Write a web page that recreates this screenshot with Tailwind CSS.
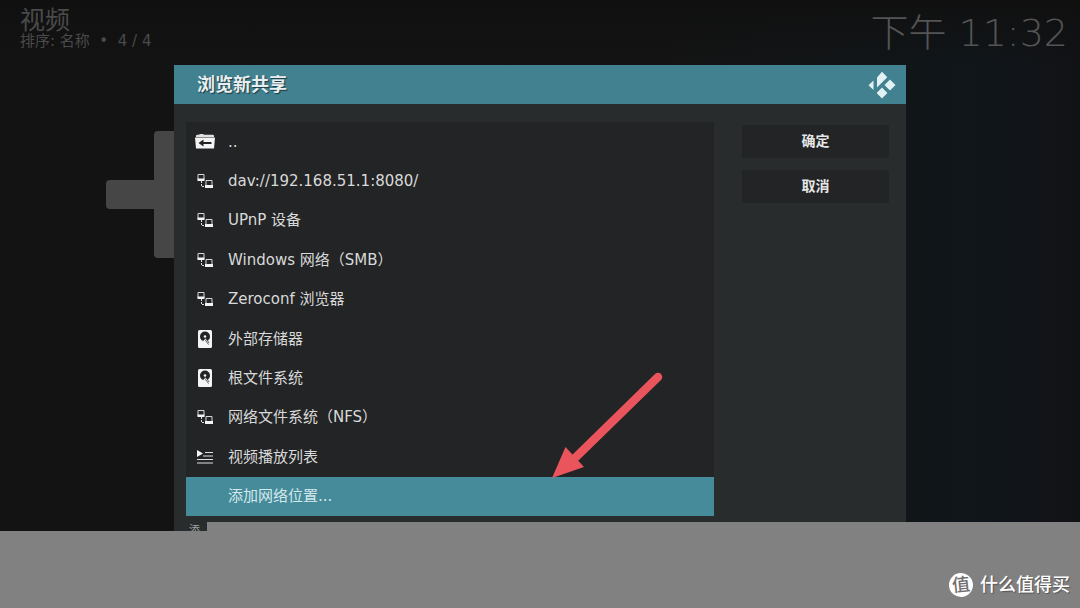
<!DOCTYPE html>
<html lang="zh-CN">
<head>
    <meta charset="UTF-8">
    <meta name="viewport" content="width=device-width, initial-scale=1.0">
    <title>视频 | 浏览新共享</title>
    <script src="https://cdn.jsdelivr.net/npm/@tailwindcss/browser@4"></script>
    <style>
        body { font-family: 'DejaVu Sans', 'Noto Sans CJK SC', sans-serif; }
    </style>
</head>
<body class="bg-[#121212]">

    <!-- Иконки -->
    <svg class="hidden">
        <symbol id="icon-up" viewBox="0 0 20 16">
            <path d="M1 3V1.500l1-.8h2L5 0h3l1 .8h9l1 .8V3z" fill="#e0e0e0"/>
            <path d="M0 3.600h20l-1 11H1z" fill="#f4f4f4"/>
            <path d="M3.500 9 8.500 5.500v2.500h8v2h-8v2.500z" fill="#222425"/>
        </symbol>
        <symbol id="icon-net" viewBox="0 0 16 14">
            <path d="M1 .5h6v5H1zM9 6.500h6v5H9z" fill="none" stroke="#d8d8d8"/>
            <path d="M.5 4.500h7V7h-7zM8 11h8v3H8z" fill="#f4f4f4"/>
            <path d="M4.500 7v6M5 12.500h3" fill="none" stroke="#e0e0e0" stroke-dasharray="2 1"/>
        </symbol>
        <symbol id="icon-disk" viewBox="0 0 14 18">
            <rect width="14" height="18" rx="1.500" fill="#f4f4f4"/>
            <circle cx="7" cy="6.500" r="5" fill="#222425"/>
            <circle cx="7" cy="6.500" r="1.300" fill="#f4f4f4"/>
            <path d="M6.500 9.500 10.500 14.500" stroke="#f4f4f4" stroke-width="3"/>
            <path d="M7 9.500 10.500 14.500M8.500 9 11 13" stroke="#222425" stroke-width=".7"/>
        </symbol>
        <symbol id="icon-list" viewBox="0 0 16 14">
            <path d="M0 0l6 3.500L0 7z" fill="#f4f4f4"/>
            <path d="M8 2.500h8M6 6h10M0 9.500h16M0 13h16" stroke="#e0e0e0" stroke-width="1.200"/>
        </symbol>
    </svg>

    <div class="relative min-h-screen flex flex-col overflow-hidden bg-linear-to-r from-[#131313] from-60% via-[#10161a] via-90% to-[#111216]">

        <!-- Шапка -->
        <header class="h-[65px] flex justify-between pl-5 pr-3 text-[#4a4a4a] bg-linear-to-b from-[#101010] to-transparent">
            <div class="pt-2">
                <h1 class="text-[25px] leading-[26px]">视频</h1>
                <p class="text-[15px] leading-[14px]">排序: 名称 &nbsp;•&nbsp; 4 / 4</p>
            </div>
            <time class="pt-3 text-[38px] leading-[42px] font-extralight text-[#545454]">下午 11:32</time>
        </header>

        <!-- Плюс за окном -->
        <div class="absolute left-[106px] top-[180px] w-[126px] h-[29px] rounded bg-[#464646]"></div>
        <div class="absolute left-[154px] top-[131px] w-[30px] h-[127px] rounded bg-[#464646]"></div>

        <!-- Окно -->
        <main class="relative flex-1 w-full max-w-[732px] mx-auto flex flex-col bg-[#282c2d]">
            <div class="h-[39px] pl-[23px] pr-[10px] flex items-center justify-between bg-[#418190]">
                <h2 class="text-[18px] leading-6 font-bold text-[#e9eef0] text-shadow-[1px_1px_1px_#1b3a42]">浏览新共享</h2>
                <svg class="size-7" viewBox="0 0 28 28" fill="#e2f1f3">
                    <path d="M9 6.500 14 .8l5.300 5.400L9 16.500zM5.500 9.500v9.500L.5 14.200zM22 8.600l5.500 5.500-5.500 5.400-5.500-5.400zM14 16.600l5.400 5.400L14 27.400 8.600 22z"/>
                </svg>
            </div>
            <div class="flex-1 flex gap-7 pt-[18px] pl-3 pr-[17px]">
                <ul id="shares" class="flex-1 h-[394px] grid auto-rows-fr bg-[#222425]"></ul>
                <div class="w-[147px] pt-[3px] flex flex-col gap-3">
                    <button class="h-[33px] rounded-xs bg-[#222425] text-[14px] font-bold text-[#e6e6e6]">确定</button>
                    <button class="h-[33px] rounded-xs bg-[#222425] text-[14px] font-bold text-[#e6e6e6]">取消</button>
                </div>
            </div>
            <p class="h-[15px] pl-[15px] pt-[9px] overflow-hidden text-[11px] leading-[12px] text-[#a0a4a5]">添</p>
        </main>

        <!-- Нижняя полоса -->
        <footer class="relative h-[77px] flex items-end justify-end gap-[7px] pr-[10px] pb-[11px] bg-[#828182]">
            <div class="absolute left-[207px] right-0 -top-[9px] h-[9px] bg-[#828182]"></div>
            <span class="size-6 flex items-center justify-center rounded-full bg-white text-[18px] leading-none font-medium text-[#6f6e6f] -rotate-6">值</span>
            <span class="text-[18px] leading-6 font-medium text-white text-shadow-[1px_1px_1px_#555]">什么值得买</span>
        </footer>

        <!-- Красная стрелка -->
        <svg class="absolute left-[550px] top-[370px] w-[115px] h-[110px]" viewBox="0 0 115 110">
            <path d="M108 7 24 89" stroke="#ea545d" stroke-width="8.500" stroke-linecap="round"/>
            <path d="M2 108 15.500 77 34 97z" fill="#ea545d"/>
        </svg>
    </div>

    <script>
        const icons = {
            up: '<svg class="w-5 h-4"><use href="#icon-up"/></svg>',
            net: '<svg class="w-4 h-3.5"><use href="#icon-net"/></svg>',
            disk: '<svg class="w-3.5 h-[18px]"><use href="#icon-disk"/></svg>',
            list: '<svg class="w-4 h-3.5"><use href="#icon-list"/></svg>'
        };

        const shares = [
            { icon: 'up', name: '..' },
            { icon: 'net', name: 'dav://192.168.51.1:8080/' },
            { icon: 'net', name: 'UPnP 设备' },
            { icon: 'net', name: 'Windows 网络（SMB）' },
            { icon: 'net', name: 'Zeroconf 浏览器' },
            { icon: 'disk', name: '外部存储器' },
            { icon: 'disk', name: '根文件系统' },
            { icon: 'net', name: '网络文件系统（NFS）' },
            { icon: 'list', name: '视频播放列表' },
            { icon: '', name: '添加网络位置...', active: true }
        ];

        const list = document.getElementById('shares');
        shares.forEach(s => {
            list.innerHTML += `
                <li class="flex">
                    <button class="flex-1 flex items-center pl-[9px] text-left text-[15px] leading-5 ${s.active ? 'bg-[#458b9a] text-[#d3e8ec]' : 'text-[#d9d9d9]'}">
                        <span class="w-5 mr-[13px] flex justify-center">${icons[s.icon] || ''}</span>
                        <span>${s.name}</span>
                    </button>
                </li>
            `;
        });
    </script>
</body>
</html>
